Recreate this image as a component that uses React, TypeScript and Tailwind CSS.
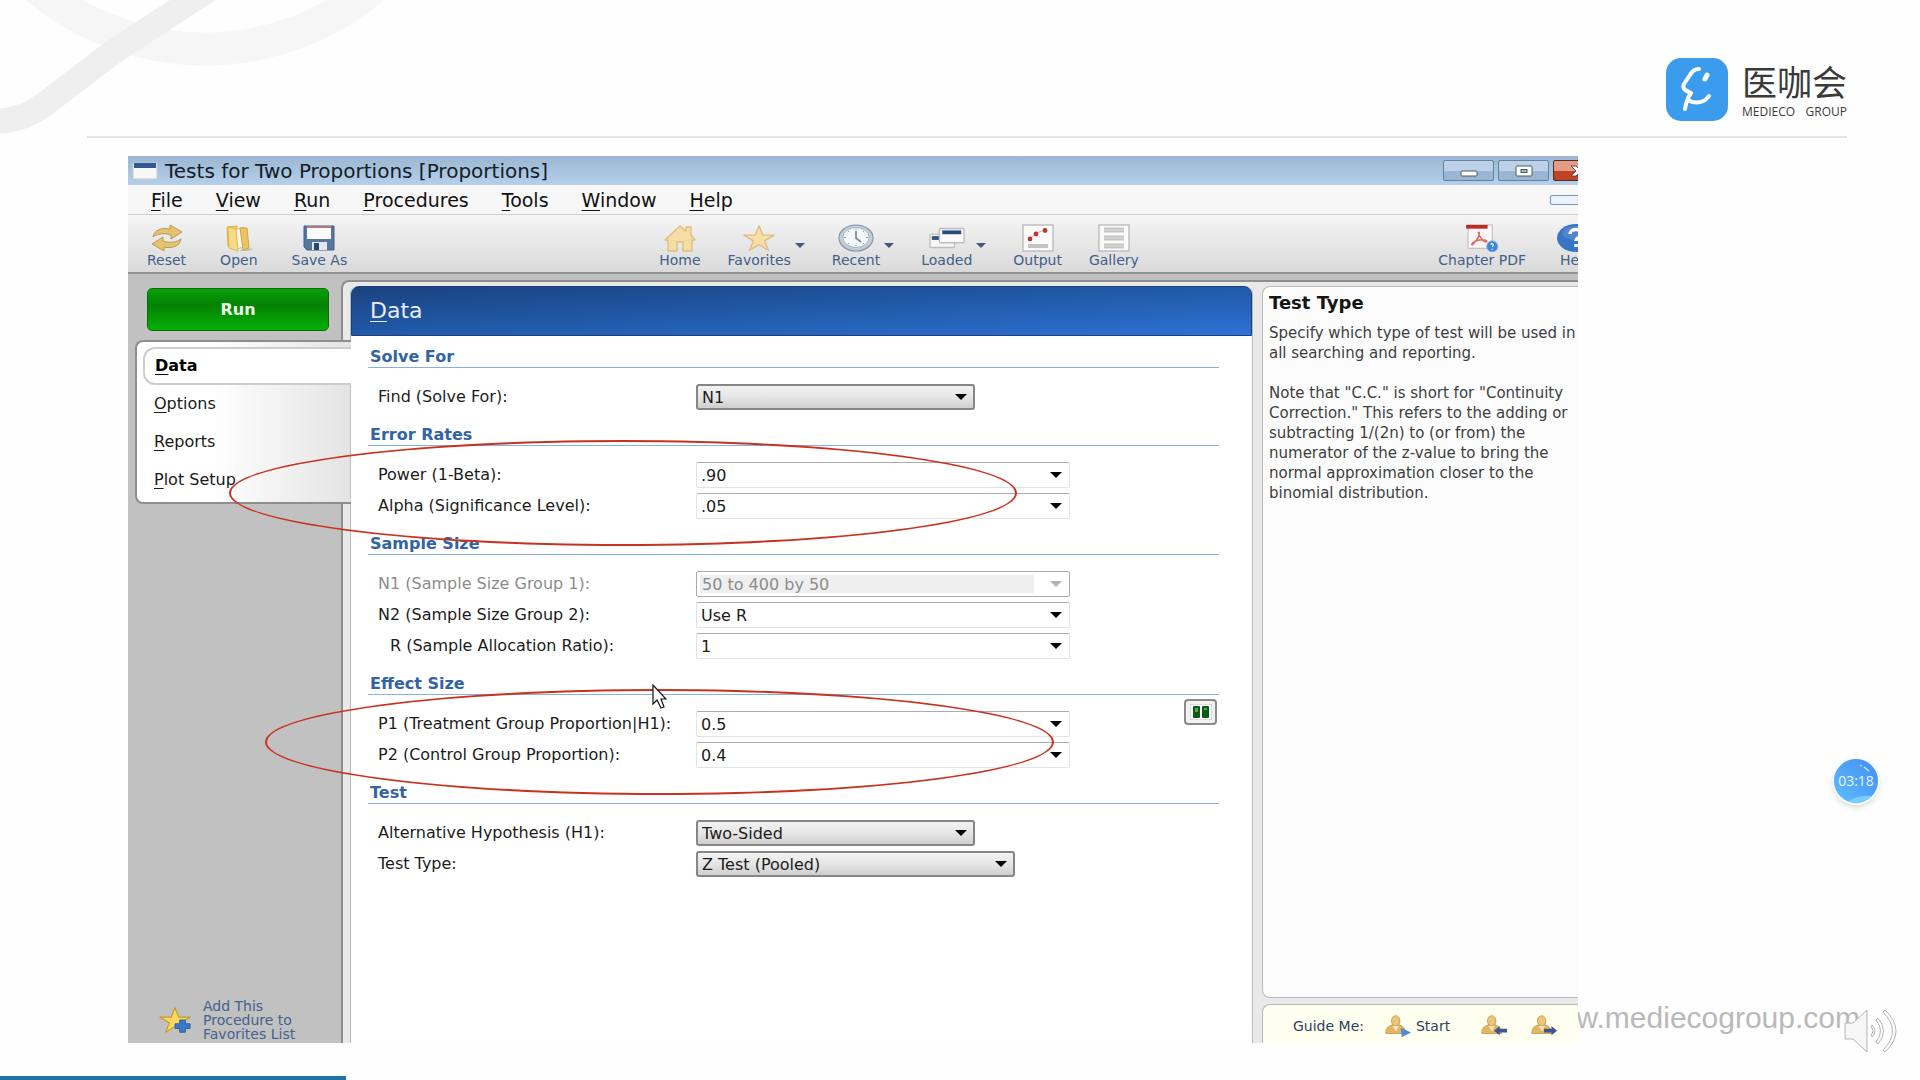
import React, { useState } from 'react';
import { clsx } from 'clsx';

const MENU_ITEMS = ['File', 'View', 'Run', 'Procedures', 'Tools', 'Window', 'Help'];
const TABS = ['Data', 'Options', 'Reports', 'Plot Setup'];

// First letter carries the keyboard mnemonic
const Mnemonic: React.FC<{ text: string }> = ({ text }) => (
  <>
    <span className="underline underline-offset-3 decoration-1">{text[0]}</span>
    {text.slice(1)}
  </>
);

const Caret: React.FC<{ className?: string }> = ({ className = 'h-1.5 w-3' }) => (
  <svg viewBox="0 0 12 6" className={clsx('shrink-0', className)}>
    <path d="M0 0H12L6 6Z" fill="currentColor" />
  </svg>
);

/* ---------- Icons ---------- */

const ResetIcon = () => (
  <svg viewBox="0 0 32 28" className="h-7 w-8" fill="#e6c36f" stroke="#b99a55" strokeWidth="1" strokeLinejoin="round">
    <path d="M2 13C3 6 11 3 19 5V1L31 8L20 15V11C14 9 8 9 2 13Z" />
    <path d="M30 15C29 22 21 25 13 23V27L1 20L12 13V17C18 19 24 19 30 15Z" />
  </svg>
);

const OpenIcon = () => (
  <svg viewBox="0 0 32 28" className="h-7 w-8">
    <path d="M20 24L31 25L25 27H17Z" fill="#bdbdbd" />
    <path d="M4 3L14 2V25L5 22Z" fill="#f3cf69" stroke="#d8b04a" strokeWidth="1" />
    <path d="M11 6L21 3L22 22L12 26Z" fill="#f4f4f1" stroke="#c5c5bd" strokeWidth="1" />
    <path d="M5 3L13 5L15 27L6 24Z" fill="#f7dc85" stroke="#dcb650" strokeWidth="1" />
    <path d="M17 4H24L26 24L20 26Z" fill="#eec45c" stroke="#d0a644" strokeWidth="1" />
  </svg>
);

const SaveIcon = () => (
  <svg viewBox="0 0 32 28" className="h-7 w-8">
    <path d="M1 2H31V26H4L1 23Z" fill="#55779f" stroke="#3f5f88" strokeWidth="1" />
    <path d="M4 2H28V15H4Z" fill="#fbfbfd" />
    <path d="M4 2H28V4H4Z" fill="#b5767c" />
    <path d="M9 18H24V26H9Z" fill="#e4e8ee" />
    <path d="M11 19H16V26H11Z" fill="#27496f" />
  </svg>
);

const HomeIcon = () => (
  <svg viewBox="0 0 32 28" className="h-7 w-8">
    <path
      d="M16 2L22 7V3H27V11L31 16H28V27H19V18H13V27H4V16H1Z"
      fill="#f5dda4"
      stroke="#e0bf80"
      strokeWidth="1.4"
      strokeLinejoin="round"
    />
  </svg>
);

const STAR = 'M17 1L21 11H33L23 17L27 27L17 21L7 27L11 17L1 11H13Z';

const StarIcon = () => (
  <svg viewBox="0 0 34 28" className="h-7 w-8">
    <path d={STAR} fill="#f8dfa6" stroke="#dcbc83" strokeWidth="1.4" strokeLinejoin="round" />
  </svg>
);

const ClockIcon = () => (
  <svg viewBox="0 0 36 28" className="h-7 w-9" fill="none">
    <ellipse cx="18" cy="14" rx="17" ry="13" fill="#c3ccd9" stroke="#8794a8" strokeWidth="1.2" />
    <ellipse cx="18" cy="13.5" rx="13" ry="10" fill="#f4f8fc" stroke="#a9b5c6" strokeWidth="1" />
    <path d="M18 7V14L23 18" stroke="#7d8da5" strokeWidth="1.8" />
    <path d="M18 4.5V6M18 21V22.5M6 13.5H8M28 13.5H30M10 7L11 8M26 7L25 8M10 20L11 19M26 20L25 19" stroke="#8fa0b8" />
  </svg>
);

const LoadedIcon = () => (
  <svg viewBox="0 0 38 28" className="h-7 w-9">
    <rect x="1" y="10" width="26" height="14" rx="1" fill="#f5f5f5" stroke="#bdbdbd" strokeWidth="1.4" />
    <rect x="3" y="12" width="20" height="4" fill="#2e5180" />
    <rect x="11" y="4" width="26" height="15" rx="1" fill="#fafafa" stroke="#bdbdbd" strokeWidth="1.4" />
    <rect x="14" y="6" width="20" height="4" fill="#254a7d" />
  </svg>
);

const OutputIcon = () => (
  <svg viewBox="0 0 32 28" className="h-7 w-8">
    <rect x="1" y="1" width="30" height="26" fill="#fbfbfb" stroke="#bcbcbc" strokeWidth="1.4" />
    <path d="M8 15L14 9L23 6" stroke="#ddb0a8" fill="none" />
    <circle cx="8" cy="15" r="2.4" fill="#c2342b" />
    <circle cx="14" cy="10" r="2.4" fill="#c2342b" />
    <circle cx="23" cy="6.5" r="2.4" fill="#c2342b" />
    <rect x="6" y="20" width="20" height="4" fill="#c4c4c4" />
  </svg>
);

const GalleryIcon = () => (
  <svg viewBox="0 0 32 28" className="h-7 w-8">
    <rect x="1" y="1" width="30" height="26" fill="#fbfbfb" stroke="#bcbcbc" strokeWidth="1.4" />
    <path d="M6 6H26M6 14H26M6 22H26" stroke="#c6c6c6" strokeWidth="5" />
    <path d="M6 6H26M6 14H26M6 22H26" stroke="#dedede" strokeWidth="1" />
  </svg>
);

const PdfIcon = () => (
  <svg viewBox="0 0 36 30" className="h-7 w-9">
    <rect x="3" y="1" width="26" height="25" fill="#faf8f7" stroke="#b9b4b4" strokeWidth="1" />
    <rect x="1" y="1" width="23" height="4" fill="#c02a22" />
    <path
      d="M14 9C17 8 14 17 8 22C6 23 7 20 12 18C18 16 24 17 23 19C22 20 16 17 14 9Z"
      fill="none"
      stroke="#e0655e"
      strokeWidth="1.6"
    />
    <circle cx="29" cy="24" r="6" fill="#3d85d8" stroke="#8db9ea" strokeWidth="1" />
    <path d="M27.5 22C28 20.5 31 21 30 23L29 24.5M29 26.5V27.5" stroke="#fff" strokeWidth="1.4" fill="none" />
  </svg>
);

const HelpIcon = () => (
  <svg viewBox="0 0 40 28" className="h-7 w-10">
    <ellipse cx="20" cy="14" rx="19" ry="14" fill="#3a74c4" />
    <ellipse cx="20" cy="9" rx="14" ry="7" fill="#5f96dc" opacity=".5" />
    <path d="M14 10C14 4 26 4 26 10C26 14 20 13 20 17M20 20V23" stroke="#fff" strokeWidth="3.5" fill="none" />
  </svg>
);

const AddFavoriteIcon = () => (
  <svg viewBox="0 0 34 28" className="h-7 w-8">
    <path d={STAR} fill="#fbd95f" stroke="#c99a2b" strokeWidth="1.2" strokeLinejoin="round" />
    <path d="M22 14H28V18H33V23H28V27H22V23H17V18H22Z" fill="#3b78c9" stroke="#2f5f9e" strokeWidth="1" />
  </svg>
);

const GuideIcon: React.FC<{ kind: 'start' | 'prev' | 'next' }> = ({ kind }) => (
  <svg viewBox="0 0 30 24" className="h-6 w-7">
    <path d="M2 20C2 13 6 12 9 11V9H16V11C19 12 23 13 23 20Z" fill="#e3b663" stroke="#c79c55" strokeWidth="1" />
    <ellipse cx="12.5" cy="6.5" rx="4.5" ry="5.5" fill="#edc67a" stroke="#c79c55" strokeWidth="1" />
    <path d="M9 12H16L13 18Z" fill="#f9e6bd" />
    {kind === 'start' && <path d="M18 14L29 19L19 24Z" fill="#4c8fd6" />}
    {kind === 'prev' && <path d="M15 17L21 12V15H29V19H21V22Z" fill="#3c5695" />}
    {kind === 'next' && <path d="M29 17L23 12V15H15V19H23V22Z" fill="#3c5695" />}
  </svg>
);

/* ---------- Window pieces ---------- */

interface ToolButtonProps {
  label: string;
  icon: React.ReactNode;
  menu?: boolean;
}

const ToolButton: React.FC<ToolButtonProps> = ({ label, icon, menu }) => (
  <button type="button" className="flex shrink-0 items-center gap-1 text-sm leading-4 text-[#41608a]">
    <span className="flex flex-col items-center">
      {icon}
      {label}
    </span>
    {menu && <Caret className="h-[5px] w-2.5 text-[#3f587c]" />}
  </button>
);

const Section: React.FC<{ title: string; children: React.ReactNode; action?: React.ReactNode }> = ({
  title,
  children,
  action,
}) => (
  <section className="relative pb-3">
    <h3 className="h-6 border-b border-[#85b1dc] pl-0.5 text-base leading-[26px] font-bold text-[#3263a3]">{title}</h3>
    <div className="flex flex-col gap-[5px] pt-4 pl-[10px]">{children}</div>
    {action}
  </section>
);

interface FieldProps {
  id: string;
  label: string;
  value: string;
  kind?: 'select' | 'combo';
  wide?: boolean;
  indent?: boolean;
  disabled?: boolean;
}

const Field: React.FC<FieldProps> = ({ id, label, value, kind = 'combo', wide, indent, disabled }) => (
  <div className="flex h-[26px] items-center text-base leading-6 text-[#1c1c1c]">
    <label
      htmlFor={id}
      className={clsx('w-[318px] shrink-0 whitespace-nowrap', indent && 'pl-3', disabled && 'text-[#8c8c8c]')}
    >
      {label}
    </label>
    {kind === 'select' ? (
      <div className={clsx('relative', wide ? 'w-[319px]' : 'w-[279px]')}>
        <select
          id={id}
          className="block h-[26px] w-full appearance-none rounded-[3px] border-2 border-[#868686] bg-linear-to-b from-[#f2f2f2] from-0% via-[#e6e6e6] via-50% to-[#cfcfcf] to-100% pl-1"
        >
          <option>{value}</option>
        </select>
        <Caret className="pointer-events-none absolute top-2.5 right-2 h-1.5 w-3 text-black" />
      </div>
    ) : (
      <div
        className={clsx(
          'flex h-[26px] w-[374px] items-center rounded-xs border bg-white',
          disabled ? 'border-[#a9a9a9] p-[3px]' : 'border-[#e0e3e8] border-t-[#a8abb1]'
        )}
      >
        <input
          id={id}
          type="text"
          defaultValue={value}
          disabled={disabled}
          className={clsx(
            'h-full min-w-0 flex-1',
            disabled ? 'bg-[#efefef] pl-0.5 text-[#8c8c8c]' : 'pl-1 text-[#1c1c1c]'
          )}
        />
        <button
          type="button"
          aria-label={`${label} presets`}
          disabled={disabled}
          className={clsx('flex w-8 justify-end', disabled ? 'pr-1 text-[#b3b3b3]' : 'pr-[7px] text-black')}
        >
          <Caret />
        </button>
      </div>
    )}
  </div>
);

const CaptionButton: React.FC<{ label: string; danger?: boolean; children: React.ReactNode }> = ({
  label,
  danger,
  children,
}) => (
  <button
    type="button"
    aria-label={label}
    className={clsx(
      'flex h-[21px] w-[51px] shrink-0 items-center justify-center rounded-xs border',
      danger
        ? 'border-[#5d2a22] bg-linear-to-b from-[#e39a86] from-50% to-[#bf4327] to-50%'
        : 'border-[#66809f] bg-linear-to-b from-[#bdd2e9] from-50% to-[#9ab6d3] to-50%'
    )}
  >
    {children}
  </button>
);

const TitleBar = () => (
  <div className="flex h-[29px] shrink-0 items-center gap-1 bg-linear-to-b from-[#9bb6d1] to-[#b5d0ea] pl-1">
    <svg viewBox="0 0 26 18" className="h-[18px] w-[26px] shrink-0">
      <rect x="1" y="1" width="24" height="16" fill="#f7f7f7" stroke="#c9c9c9" />
      <rect x="2" y="1" width="22" height="5" fill="#315a94" />
    </svg>
    <h1 className="flex-1 pl-[3px] text-xl leading-7 whitespace-nowrap text-[#141c28]">
      Tests for Two Proportions [Proportions]
    </h1>
    <div className="-mr-[26px] flex gap-1">
      <CaptionButton label="Minimize">
        <svg viewBox="0 0 18 14" className="h-3.5 w-[18px]">
          <rect x="1" y="7" width="16" height="5" rx="1" fill="#fff" stroke="#4d5866" />
        </svg>
      </CaptionButton>
      <CaptionButton label="Maximize">
        <svg viewBox="0 0 18 12" className="h-3 w-[18px]">
          <rect x="1" y="1" width="16" height="10" rx="1" fill="#fff" stroke="#4d5866" />
          <rect x="6" y="4.5" width="6" height="3" fill="#9fb7d2" stroke="#4d5866" />
        </svg>
      </CaptionButton>
      <CaptionButton label="Close" danger>
        <svg viewBox="0 0 18 12" className="h-3 w-[18px]">
          <path d="M1 1H6L9 4L12 1H17L12 6L17 11H12L9 8L6 11H1L6 6Z" fill="#fff" stroke="#5b4a4d" />
        </svg>
      </CaptionButton>
    </div>
  </div>
);

const MenuBar = () => (
  <nav className="flex h-[30px] shrink-0 items-center gap-[33px] border-b border-[#cfcfcf] bg-[#f7f7f7] pl-[23px] text-[19px] leading-6 text-[#111]">
    {MENU_ITEMS.map((item) => (
      <button key={item} type="button">
        <Mnemonic text={item} />
      </button>
    ))}
    <div className="-mr-3 ml-auto h-2.5 w-10 rounded-xs border border-[#7b93b5] bg-[#eaf2fd]" />
  </nav>
);

const Toolbar = () => (
  <div className="flex h-[59px] shrink-0 items-center border-b-2 border-[#929292] bg-linear-to-b from-[#f5f5f5] to-[#dadada] pt-1 pl-[19px]">
    <div className="flex gap-[34px]">
      <ToolButton label="Reset" icon={<ResetIcon />} />
      <ToolButton label="Open" icon={<OpenIcon />} />
      <ToolButton label="Save As" icon={<SaveIcon />} />
    </div>
    <div className="ml-[312px] flex gap-[27px]">
      <ToolButton label="Home" icon={<HomeIcon />} />
      <ToolButton label="Favorites" icon={<StarIcon />} menu />
      <ToolButton label="Recent" icon={<ClockIcon />} menu />
      <ToolButton label="Loaded" icon={<LoadedIcon />} menu />
      <ToolButton label="Output" icon={<OutputIcon />} />
      <ToolButton label="Gallery" icon={<GalleryIcon />} />
    </div>
    <div className="-mr-[18px] ml-auto flex gap-[30px]">
      <ToolButton label="Chapter PDF" icon={<PdfIcon />} />
      <ToolButton label="Help" icon={<HelpIcon />} />
    </div>
  </div>
);

const Sidebar = () => {
  const [active, setActive] = useState('Data');

  return (
    <div className="relative z-10 flex w-[213px] shrink-0 flex-col pt-[14px] pb-0.5">
      <button
        type="button"
        className="mr-3 ml-[19px] h-[43px] rounded-[5px] border border-[#0a6b0a] bg-linear-to-b from-[#06a006] via-[#048204] via-40% to-[#05b005] text-base font-bold text-[#f0fbe8]"
      >
        Run
      </button>

      {/* Tab strip runs over the divider so the active tab joins the form */}
      <nav className="-mr-[10px] mt-[9px] ml-[7px] flex flex-col rounded-l-lg border-y-2 border-l-2 border-[#8e8e8e] bg-linear-to-r from-white from-35% to-[#e4e4e4] pt-[5px] pb-[3px] pl-[6px] text-base leading-6 text-[#1a1a1a]">
        {TABS.map((tab) => (
          <button
            key={tab}
            type="button"
            onClick={() => setActive(tab)}
            className={clsx(
              'h-[38px] text-left',
              active === tab
                ? 'rounded-l-xl border-y-2 border-l-2 border-[#cdcdcd] bg-white pl-2.5 font-bold text-black'
                : 'border-r border-[#bdbdbd] pl-[11px]'
            )}
          >
            <Mnemonic text={tab} />
          </button>
        ))}
      </nav>

      <button
        type="button"
        className="mt-auto flex items-center gap-3 pl-[31px] text-left text-sm leading-[14px] text-[#45628c]"
      >
        <AddFavoriteIcon />
        <span>
          Add This
          <br />
          Procedure to
          <br />
          Favorites List
        </span>
      </button>
    </div>
  );
};

const DataForm = () => (
  <main className="flex min-w-0 flex-1 flex-col rounded-t-lg border-x border-[#b9b9b9] bg-white">
    <h2 className="h-[50px] shrink-0 rounded-t-lg border border-[#1c3f75] bg-linear-to-br from-[#1a4380] via-[#215aa9] to-[#2d72d4] pl-[18px] text-[22px] leading-[48px] text-[#e9eef6]">
      <Mnemonic text="Data" />
    </h2>
    <form className="flex flex-col pt-2 pr-[33px] pl-[17px]">
      <Section title="Solve For">
        <Field id="solve-for" label="Find (Solve For):" value="N1" kind="select" />
      </Section>
      <Section title="Error Rates">
        <Field id="power" label="Power (1-Beta):" value=".90" />
        <Field id="alpha" label="Alpha (Significance Level):" value=".05" />
      </Section>
      <Section title="Sample Size">
        <Field id="n1" label="N1 (Sample Size Group 1):" value="50 to 400 by 50" disabled />
        <Field id="n2" label="N2 (Sample Size Group 2):" value="Use R" />
        <Field id="ratio" label="R (Sample Allocation Ratio):" value="1" indent />
      </Section>
      <Section
        title="Effect Size"
        action={
          <button
            type="button"
            aria-label="Effect size tool"
            className="absolute top-7 right-0.5 flex h-[26px] w-[33px] items-center justify-center rounded-sm border-2 border-[#8a8a8a] bg-[#f2f2f2]"
          >
            <svg viewBox="0 0 22 16" className="h-4 w-[22px]">
              <rect width="22" height="16" fill="#fff" stroke="#bbb" />
              <rect x="3" y="2" width="7" height="12" rx="1" fill="#0c5a14" />
              <rect x="12" y="2" width="7" height="12" rx="1" fill="#0c5a14" />
              <path d="M5 4H8V8H5ZM14 4H17V6H14Z" fill="#3db24a" />
            </svg>
          </button>
        }
      >
        <Field id="p1" label="P1 (Treatment Group Proportion|H1):" value="0.5" />
        <Field id="p2" label="P2 (Control Group Proportion):" value="0.4" />
      </Section>
      <Section title="Test">
        <Field id="alternative" label="Alternative Hypothesis (H1):" value="Two-Sided" kind="select" />
        <Field id="test-type" label="Test Type:" value="Z Test (Pooled)" kind="select" wide />
      </Section>
    </form>
  </main>
);

const HelpPanel = () => (
  <aside className="flex w-[316px] shrink-0 flex-col gap-1.5">
    <div className="flex-1 rounded-l-lg border-y border-l border-[#b9b9b9] bg-[#fcfcfc] pt-1 pl-1.5 text-[15px] leading-5 text-[#3c3f42]">
      <h2 className="mb-2 text-lg leading-6 font-bold text-[#151515]">Test Type</h2>
      <p className="mb-5">Specify which type of test will be used in all searching and reporting.</p>
      <p>
        Note that "C.C." is short for "Continuity Correction." This refers to the adding or subtracting 1/(2n) to (or
        from) the numerator of the z-value to bring the normal approximation closer to the binomial distribution.
      </p>
    </div>
    <div className="flex h-[39px] shrink-0 items-center rounded-tl-lg border-t border-l border-[#b9b9b9] bg-[#fffff0] pt-1 pl-[30px] text-sm leading-5 text-[#2d3f60]">
      <span>Guide Me:</span>
      <button type="button" className="ml-5 flex items-center gap-1">
        <GuideIcon kind="start" />
        Start
      </button>
      <button type="button" aria-label="Previous" className="ml-[30px]">
        <GuideIcon kind="prev" />
      </button>
      <button type="button" aria-label="Next" className="ml-[22px]">
        <GuideIcon kind="next" />
      </button>
    </div>
  </aside>
);

const BrandLogo = () => (
  <div className="flex items-start gap-3.5">
    <svg viewBox="0 0 62 63" className="h-[63px] w-[62px]">
      <rect width="62" height="63" rx="15" fill="#3b9cee" />
      <g fill="none" stroke="#fff" strokeLinecap="round" strokeLinejoin="round">
        <path d="M33 11C29 11 26 13 24 17L18 26C16 30 18 32 25 35C22 39 20 45 19 51" strokeWidth="4" />
        <path d="M22 42C30 47 39 44 43 38" strokeWidth="4" />
        <path d="M41 17L39 21" strokeWidth="5" />
      </g>
    </svg>
    <div className="flex w-[105px] flex-col text-[#3a3a3a]">
      <span className="font-['Noto_Sans_CJK_SC',sans-serif] text-[35px] leading-[46px]">医咖会</span>
      <span className="flex justify-between font-['Open_Sans',sans-serif] text-xs leading-4">
        <span>MEDIECO</span>
        <span>GROUP</span>
      </span>
    </div>
  </div>
);

export default function App() {
  return (
    <div className="relative flex h-screen min-h-[960px] flex-col overflow-hidden bg-[#fefefe] font-['DejaVu_Sans',sans-serif]">
      {/* Corner ornament */}
      <svg viewBox="0 0 400 140" className="absolute top-0 left-0 h-[140px] w-[400px]" fill="none">
        <circle cx="205" cy="-212" r="261" stroke="#f6f6f6" strokeWidth="33" />
        <path d="M208 -10L113 52L45 104Q22 121 -4 121" stroke="#efefef" strokeWidth="25" />
      </svg>

      <header className="relative mr-[73px] ml-[87px] flex h-[138px] shrink-0 items-start justify-end border-b-2 border-[#e6e6e6] pt-[58px]">
        <BrandLogo />
      </header>

      <div className="absolute right-[60px] bottom-11 font-['Liberation_Sans',sans-serif] text-[30px] leading-9 text-[#b9b9b9]">
        www.mediecogroup.com
      </div>

      <div className="relative mt-[18px] mr-[342px] mb-[33px] ml-32 flex min-h-0 flex-1 flex-col overflow-hidden bg-[#c1c1c1]">
        <TitleBar />
        <MenuBar />
        <Toolbar />
        <div className="flex min-h-0 flex-1">
          <Sidebar />
          <div className="mt-[6px] flex min-w-0 flex-1 gap-[9px] rounded-tl-lg border-t-2 border-l-2 border-[#8e8e8e] bg-[#e9e9e9] pt-1 pl-[7px]">
            <DataForm />
            <HelpPanel />
          </div>
        </div>

        {/* Hand-drawn callouts over the fields that matter */}
        <div className="pointer-events-none absolute top-[284px] left-[101px] z-20 h-[106px] w-[788px] rounded-[50%] border-2 border-[#c8331f]" />
        <div className="pointer-events-none absolute top-[533px] left-[137px] z-20 h-[106px] w-[789px] rounded-[50%] border-2 border-[#c8331f]" />
        <svg viewBox="0 0 15 25" className="pointer-events-none absolute top-[528px] left-[524px] z-30 h-[25px] w-[15px]">
          <path d="M1 1V20L5 16L9 24L12 23L9 15H14Z" fill="#fff" stroke="#111" strokeWidth="1.2" />
        </svg>
      </div>

      {/* Recording timer bubble */}
      <div className="absolute right-10 bottom-[275px] flex size-12 items-center justify-center rounded-full border-2 border-[#f0faff] bg-linear-to-bl from-[#428df5] to-[#62bdfb] font-['Open_Sans',sans-serif] text-sm text-[#e8f6ff] shadow-md">
        03:18
        <svg viewBox="0 0 44 44" className="absolute inset-0 size-11">
          <path d="M14 42Q26 36 38 37Q28 46 14 42Z" fill="#79d0ff" />
          <path d="M26 6L28 7M30 8L35 12" stroke="#d5ecff" strokeWidth="1.2" />
        </svg>
      </div>

      <svg viewBox="0 0 54 44" className="absolute right-[22px] bottom-[27px] h-11 w-[54px]" stroke="#b4b4b4">
        <path d="M1 14H9L23 1V43L9 30H1Z" fill="#f6f6f6" />
        <g fill="#fff">
          <path d="M28 16Q34 22 28 28L27 26Q31 22 27 18Z" />
          <path d="M34 9Q45 22 34 35L32 33Q41 22 32 11Z" />
          <path d="M41 1Q63 22 41 43L39 41Q58 22 39 3Z" />
        </g>
      </svg>

      <div className="h-1 w-[18%] shrink-0 bg-[#2272aa]" />
    </div>
  );
}
